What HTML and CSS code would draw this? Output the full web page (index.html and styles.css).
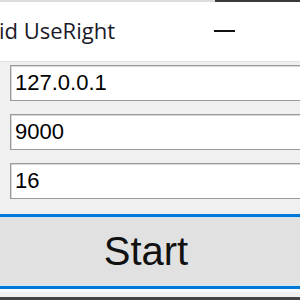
FILE: index.html
```html
<!DOCTYPE html>
<html lang="en">
<head>
  <meta charset="UTF-8">
  <title>UseRight</title>
  <link rel="stylesheet" href="styles.css">
</head>
<body>
  <div class="window">
    <div class="titlebar">
      <span class="title">id UseRight</span>
      <span class="min"></span>
    </div>
    <div class="body">
      <input class="field" type="text" value="127.0.0.1">
      <input class="field" type="text" value="9000">
      <input class="field" type="text" value="16">
      <button class="start">Start</button>
    </div>
  </div>
</body>
</html>
```

FILE: styles.css
```css
/* ---- reset ---- */
* { margin:0; padding:0; box-sizing:border-box; }
html, body { width:300px; height:300px; overflow:hidden; background:#f0f0f0; }

.window { display:flex; flex-direction:column; width:300px; height:300px; overflow:hidden; }

/* ---- title bar ---- */
.titlebar {
  height:62px; flex:none; display:flex; align-items:center;
  background:linear-gradient(to right, #dcdcdc 215px, #3a3a3a 215px) top / 100% 2px no-repeat, #fff;
  border-bottom:1px solid #e2e2e2;
  font-family:"Open Sans", "Noto Sans", sans-serif; font-size:22px; color:#1a1a2a;
}
.title { margin:-2px 0 0 -1px; width:215px; }
.min { width:21px; height:2px; background:#111; }

/* ---- fields ---- */
.body { display:flex; flex-direction:column; gap:13px; padding:3px 0 0 10px; flex:1; border-bottom:3px solid #444; }
.field {
  width:310px; height:36px; padding:0 4px; flex:none;
  border:1px solid #9a9a9a; box-shadow:inset 1px 1px 0 #d8d8d8;
  background:#fff; outline:none;
  font-family:"Liberation Sans", sans-serif; font-size:22px; color:#000;
}

/* ---- button ---- */
.start {
  margin:2px 0 6px -14px; width:330px; height:75px; flex:none;
  padding-right:30px;
  border:3px solid #0078d7; box-shadow:inset 0 0 0 1px #cde6f8, 0 3px 0 #fafafa;
  background:#e1e1e1; color:#111;
  font-family:"Liberation Sans", sans-serif; font-size:40px;
}
```
